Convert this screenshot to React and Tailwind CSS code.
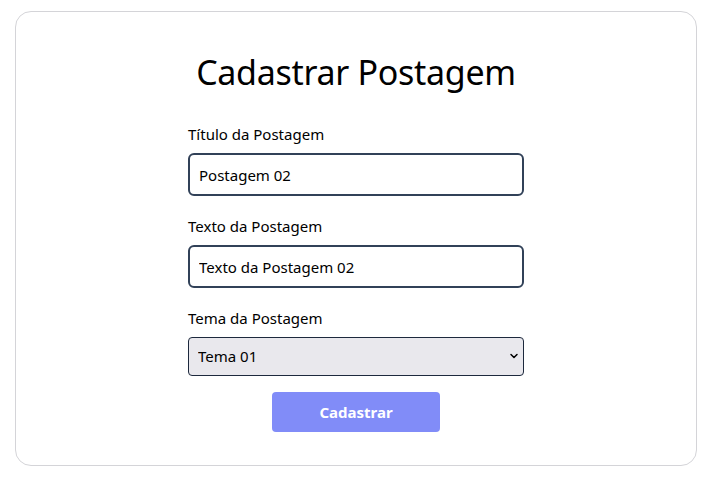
import React, { useState } from 'react';
import { ChevronDown } from 'lucide-react';

export default function App() {
  const [titulo, setTitulo] = useState('Postagem 02');
  const [texto, setTexto] = useState('Texto da Postagem 02');
  const [tema, setTema] = useState('1');

  return (
    <div className="w-[712px] h-[478px] bg-white px-[15px] pt-[11px] font-['Noto_Sans',sans-serif] text-black">
      <div className="h-[455px] border border-[#d4d4d8] rounded-2xl flex flex-col items-center pt-[40px]">
        <h1 className="text-[34px] leading-[40px] tracking-[-0.3px]">Cadastrar Postagem</h1>

        <form className="w-[336px] mt-[30px] flex flex-col" onSubmit={e => e.preventDefault()}>
          <label className="text-[15px] leading-6">Título da Postagem</label>
          <input
            value={titulo}
            onChange={e => setTitulo(e.target.value)}
            className="mt-[7px] h-[43px] border-2 border-slate-700 rounded-md px-[9px] text-[15px] outline-none"
          />

          <label className="mt-[18px] text-[15px] leading-6">Texto da Postagem</label>
          <input
            value={texto}
            onChange={e => setTexto(e.target.value)}
            className="mt-[7px] h-[43px] border-2 border-slate-700 rounded-md px-[9px] text-[15px] outline-none"
          />

          <label className="mt-[18px] text-[15px] leading-6">Tema da Postagem</label>
          <div className="relative mt-[7px]">
            <select
              value={tema}
              onChange={e => setTema(e.target.value)}
              className="w-full h-[39px] appearance-none bg-[#e9e8ed] border border-slate-800 rounded px-[9px] text-[15px] outline-none"
            >
              <option value="1">Tema 01</option>
              <option value="2">Tema 02</option>
            </select>
            <ChevronDown className="absolute right-[4px] top-[13px] w-[12px] h-[12px] text-black pointer-events-none" strokeWidth={3} />
          </div>

          <button
            type="submit"
            className="mt-4 self-center w-[168px] h-10 bg-[#818cf8] text-white font-bold text-[15px] rounded"
          >
            Cadastrar
          </button>
        </form>
      </div>
    </div>
  );
}
